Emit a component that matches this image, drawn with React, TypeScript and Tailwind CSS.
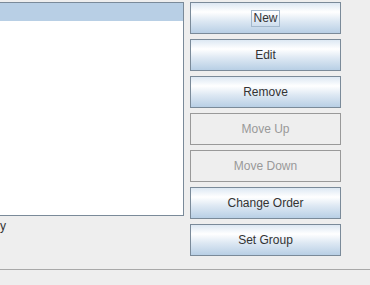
import React from "react";

const buttons = [
  { label: "New", enabled: true, focused: true },
  { label: "Edit", enabled: true },
  { label: "Remove", enabled: true },
  { label: "Move Up", enabled: false },
  { label: "Move Down", enabled: false },
  { label: "Change Order", enabled: true },
  { label: "Set Group", enabled: true },
];

function MetalButton({ label, enabled, focused }: { label: string; enabled: boolean; focused?: boolean }) {
  if (!enabled) {
    return (
      <button
        disabled
        className="w-[151px] h-[32px] border border-[#999999] bg-[#eeeeee] text-[12px] text-[#999999] flex items-center justify-center"
      >
        {label}
      </button>
    );
  }
  return (
    <button className="w-[151px] h-[32px] border border-[#7a8a99] bg-[linear-gradient(to_bottom,#dde8f3_0%,#ffffff_30%,#dde8f3_60%,#b8cfe5_100%)] text-[12px] text-[#333333] flex items-center justify-center">
      {focused ? (
        <span className="border border-[#a3b8cc] px-[1px] leading-[15px]">{label}</span>
      ) : (
        <span>{label}</span>
      )}
    </button>
  );
}

export default function App() {
  return (
    <div className="w-[370px] h-[285px] bg-[#eeeeee] overflow-hidden font-['Liberation_Sans',Arial,sans-serif] text-[#333333] text-[12px] flex flex-col">
      <div className="flex pt-[2px]">
        {/* list column */}
        <div className="w-[184px] flex flex-col">
          <div className="ml-[-20px] w-[204px] h-[214px] border border-[#7a8a99] bg-white">
            <div className="h-[18px] bg-[#b8cfe5]" />
          </div>
          <div className="mt-[3px] leading-[15px]">y</div>
        </div>

        {/* buttons */}
        <div className="ml-[6px] flex flex-col gap-[5px]">
          {buttons.map((b) => (
            <MetalButton key={b.label} label={b.label} enabled={b.enabled} focused={b.focused} />
          ))}
        </div>
      </div>
      <div className="mt-[13px] border-t border-[#a8a8a8]" />
    </div>
  );
}
